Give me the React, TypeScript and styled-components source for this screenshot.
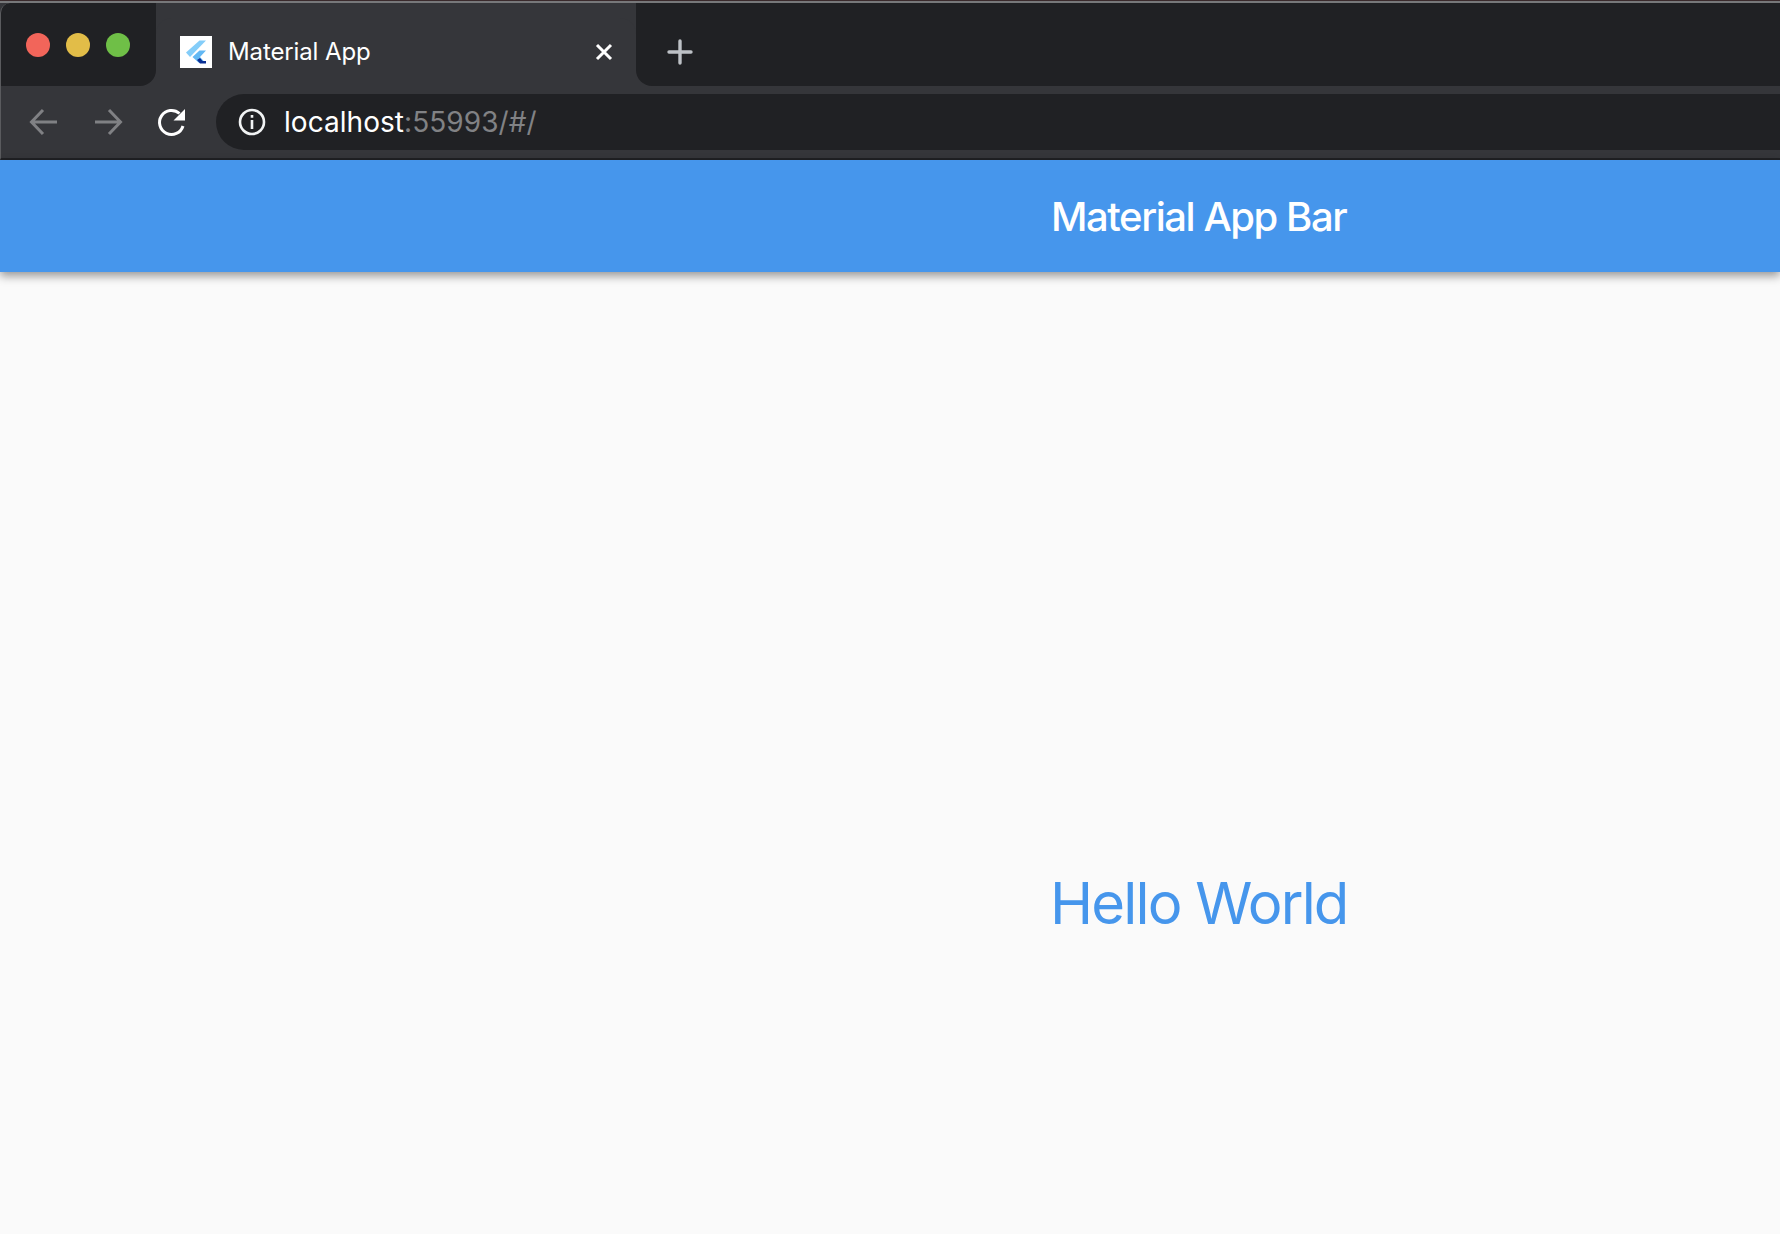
import styled, { createGlobalStyle } from 'styled-components';

const GlobalStyle = createGlobalStyle`
  html, body {
    margin: 0;
    padding: 0;
    height: 100%;
    background: #fafafa;
  }
  #root {
    height: 100%;
  }
`;

const Page = styled.div`
  display: flex;
  flex-direction: column;
  height: 1234px;
  overflow: hidden;
  background: #fafafa;
  font-family: Inter, 'Liberation Sans', sans-serif;
`;

const Chrome = styled.div`
  display: flex;
  flex-direction: column;
  flex: none;
  background: #202124;
  border-top: 1px solid #3a2a2c;
`;

const TopEdge = styled.div`
  height: 2px;
  background: #77787a;
`;

const TabStrip = styled.div`
  display: flex;
  align-items: flex-end;
  height: 83px;
  background: #35363a;
`;

const LightsArea = styled.div`
  display: flex;
  align-items: flex-start;
  gap: 16px;
  width: 156px;
  height: 83px;
  box-sizing: border-box;
  padding: 30px 0 0 25px;
  background: #202124;
  border-left: 1px solid #5a5b5e;
  border-radius: 10px 0 16px 0;
`;

const Light = styled.span<{ $color: string }>`
  width: 24px;
  height: 24px;
  border-radius: 50%;
  background: ${(p) => p.$color};
`;

const Tab = styled.div`
  display: flex;
  align-items: center;
  width: 480px;
  height: 68px;
  box-sizing: border-box;
  padding: 0 20px 0 24px;
  background: #35363a;
  border-radius: 16px 16px 0 0;
  color: #fff;
  font-size: 24px;
  letter-spacing: -0.12px;
`;

const Favicon = styled.svg`
  width: 32px;
  height: 32px;
  flex: none;
  margin-right: 16px;
  background: #fff;
`;

const FaviconMark = styled.g`
  filter: blur(0.7px);
`;

const TabTitle = styled.span`
  flex: 1;
  padding-bottom: 1px;
`;

const StripRest = styled.div`
  display: flex;
  align-items: center;
  flex: 1;
  height: 83px;
  box-sizing: border-box;
  padding: 15px 0 0 30px;
  background: #202124;
  border-radius: 0 0 0 16px;
`;

const Toolbar = styled.div`
  display: flex;
  align-items: center;
  height: 74px;
  box-sizing: border-box;
  padding-left: 27px;
  background: #35363a;
  border-left: 1px solid #5a5b5e;
  border-bottom: 2px solid #202124;
`;

const NavButton = styled.svg<{ $gap: number }>`
  width: 32px;
  height: 32px;
  flex: none;
  margin-right: ${(p) => p.$gap}px;
`;

const AddressBar = styled.div`
  display: flex;
  align-items: center;
  flex: 1;
  height: 56px;
  box-sizing: border-box;
  padding-left: 22px;
  background: #202124;
  border-radius: 28px 0 0 28px;
  font-size: 28px;
  letter-spacing: 0.05px;
  color: #fff;
`;

const InfoIcon = styled.svg`
  width: 28px;
  height: 28px;
  flex: none;
  margin-right: 18px;
`;

const UrlRest = styled.span`
  color: #818285;
`;

const AppBar = styled.header`
  position: relative;
  display: flex;
  align-items: center;
  flex: none;
  height: 112px;
  box-sizing: border-box;
  padding-left: 1051px;
  background: #4696ec;
  box-shadow: 0 4px 9px rgba(0, 0, 0, 0.4);
  color: #fff;
  font-size: 40px;
  font-weight: 500;
  letter-spacing: -1.45px;
`;

const Body = styled.main`
  display: flex;
  align-items: center;
  flex: 1;
  padding: 300px 0 0 1050px;
  color: #4696ec;
  font-size: 58px;
  letter-spacing: -1.8px;
`;

export default function App() {
  return (
    <Page>
      <GlobalStyle />
      <Chrome>
        <TopEdge />
        <TabStrip>
          <LightsArea>
            <Light $color="#f2655a" />
            <Light $color="#e2bd48" />
            <Light $color="#6fbf47" />
          </LightsArea>
          <Tab>
            <Favicon viewBox="0 0 32 32">
              <FaviconMark>
                <path d="M6 16.5 L19.5 4.5 H26 L10 21 Z" fill="#84cdf9" />
                <path d="M12.5 21 L19.5 14.5 H26 L20 21 L25 26.5 H18.5 Z" fill="#62b8f4" />
                <path d="M17 24 L20 22 L22.5 25 H26 V27.5 H20 Z" fill="#0b2f94" />
              </FaviconMark>
            </Favicon>
            <TabTitle>Material App</TabTitle>
            <svg width="24" height="24" viewBox="0 0 24 24" fill="none" stroke="#fff" strokeWidth="3">
              <path d="M5 5 L19 19 M19 5 L5 19" />
            </svg>
          </Tab>
          <StripRest>
            <svg width="28" height="28" viewBox="0 0 28 28" fill="none" stroke="#bdc1c6" strokeWidth="3.4" strokeLinecap="round">
              <path d="M14 3 V25 M3 14 H25" />
            </svg>
          </StripRest>
        </TabStrip>
        <Toolbar>
          <NavButton $gap={32} viewBox="0 0 32 32" fill="none" stroke="#808184" strokeWidth="3">
            <path d="M29 16 H4 M15 4 L3.5 16 L15 28" />
          </NavButton>
          <NavButton $gap={32} viewBox="0 0 32 32" fill="none" stroke="#808184" strokeWidth="3">
            <path d="M3 16 H28 M17 4 L28.5 16 L17 28" />
          </NavButton>
          <NavButton $gap={28} viewBox="0 0 32 32" fill="none">
            <path d="M27 20 A12 12 0 1 1 23.5 7.5" stroke="#fff" strokeWidth="3" />
            <path d="M29 3 V14.5 H17.5 Z" fill="#fff" />
          </NavButton>
          <AddressBar>
            <InfoIcon viewBox="0 0 28 28" fill="none" stroke="#f1f3f4" strokeWidth="2.6">
              <circle cx="14" cy="14" r="12" />
              <path d="M14 12 V21 M14 7 V9.8" />
            </InfoIcon>
            <span>localhost</span>
            <UrlRest>:55993/#/</UrlRest>
          </AddressBar>
        </Toolbar>
      </Chrome>
      <AppBar>Material App Bar</AppBar>
      <Body>Hello World</Body>
    </Page>
  );
}
